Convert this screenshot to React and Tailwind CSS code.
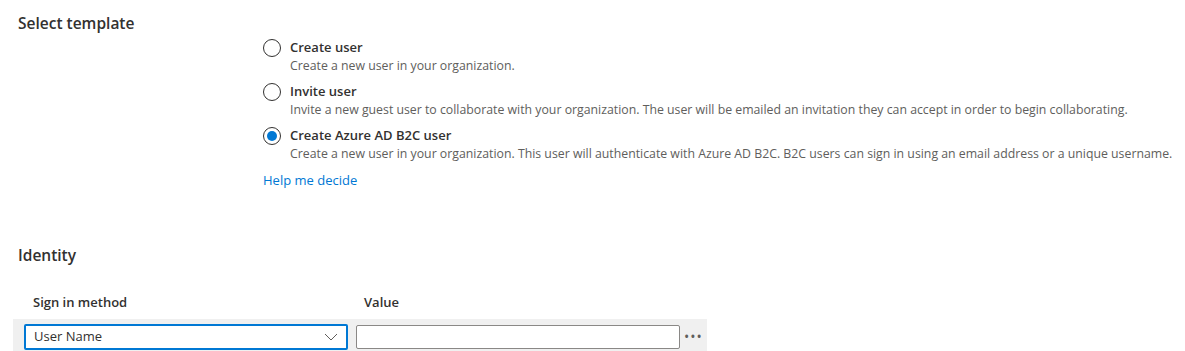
import React, { useState } from 'react';

const templates = [
  {
    id: 'create',
    title: 'Create user',
    desc: 'Create a new user in your organization.',
  },
  {
    id: 'invite',
    title: 'Invite user',
    desc: 'Invite a new guest user to collaborate with your organization. The user will be emailed an invitation they can accept in order to begin collaborating.',
  },
  {
    id: 'b2c',
    title: 'Create Azure AD B2C user',
    desc: 'Create a new user in your organization. This user will authenticate with Azure AD B2C. B2C users can sign in using an email address or a unique username.',
  },
];

const Radio = ({ checked }) => (
  <span className="w-[18px] h-[18px] rounded-full border border-[#323130] flex items-center justify-center shrink-0 bg-white">
    {checked && <span className="w-[10px] h-[10px] rounded-full bg-[#0078d4]" />}
  </span>
);

const App = () => {
  const [selected, setSelected] = useState('b2c');

  return (
    <div className="w-[1185px] h-[351px] bg-white text-[#323130] overflow-hidden font-['Open_Sans',sans-serif]">
      {/* Select template */}
      <div className="pl-[18px] pt-[12px]">
        <h2 className="text-[15.5px] leading-[22px] font-semibold">Select template</h2>
      </div>
      <div className="pl-[263px] mt-[3px]">
        {templates.map((t) => (
          <label key={t.id} className="flex items-start gap-[9px] mb-[6px] cursor-pointer" onClick={() => setSelected(t.id)}>
            <span className="pt-[2px]">
              <Radio checked={selected === t.id} />
            </span>
            <span className="flex flex-col">
              <span className="text-[13px] leading-[20px] font-semibold">{t.title}</span>
              <span className="text-[12.3px] leading-[18px] text-[#605e5c]">{t.desc}</span>
            </span>
          </label>
        ))}
        <a href="#" className="block text-[13px] leading-[20px] text-[#0078d4] mt-[7px]">Help me decide</a>
      </div>

      {/* Identity */}
      <div className="pl-[18px] mt-[54px]">
        <h2 className="text-[15.5px] leading-[22px] font-semibold">Identity</h2>
      </div>
      <div className="pl-[13px] mt-[26px] w-[707px]">
        <div className="flex text-[13px] leading-[20px] font-semibold pb-[7px]">
          <div className="w-[331px] pl-[20px]">Sign in method</div>
          <div className="pl-[20px]">Value</div>
        </div>
        <div className="flex items-start bg-[#f0f0f0] h-[40px] pt-[5px] pl-[11px] gap-[8px]">
          <div className="w-[324px] shrink-0 h-[26px] border-2 border-[#0078d4] rounded-[2px] bg-white flex items-center justify-between pl-[8px] pr-[8px]">
            <span className="text-[13px]">User Name</span>
            <svg width="14" height="8" viewBox="0 0 14 8" fill="none">
              <path d="M1 1l6 6 6-6" stroke="#605e5c" strokeWidth="1" />
            </svg>
          </div>
          <div className="w-[324px] shrink-0 h-[24px] mt-[1px] border border-[#8a8886] rounded-[2px] bg-white" />
          <span className="text-[#605e5c] text-[14px] leading-[26px] tracking-[1px] ml-[-4px]">•••</span>
        </div>
      </div>
    </div>
  );
};

export default App;
